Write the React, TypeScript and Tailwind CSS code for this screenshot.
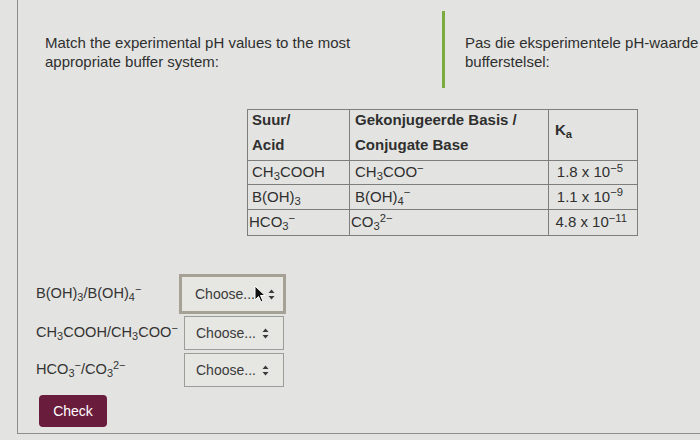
import React from "react";

const Arrows = () => (
	<svg width="7" height="11" viewBox="0 0 7 11" className="shrink-0">
		<path d="M3.5 0.5 L6.5 4 L0.5 4 Z" fill="#3a3a3a" />
		<path d="M3.5 10.5 L6.5 7 L0.5 7 Z" fill="#3a3a3a" />
	</svg>
);

const Cursor = () => (
	<svg width="12" height="18" viewBox="0 0 12 18" className="absolute left-[72px] top-[8px]">
		<path d="M1 1 L1 15 L4.5 11.5 L7 17 L9 16 L6.5 10.5 L11 10.5 Z" fill="#111" stroke="#fff" strokeWidth="1" />
	</svg>
);

const Select = ({ focused }: { focused?: boolean }) => (
	<div
		className={
			focused
				? "relative flex items-center gap-[13px] w-[107px] h-[40px] -ml-[5px] pl-[13px] border-[3px] border-[#a5a195] bg-[#e6e6e3]"
				: "relative flex items-center gap-[6px] w-[100px] h-[34px] pl-[11px] border border-[#9c9c98] bg-[#e6e6e3]"
		}
	>
		<span className="text-[14px] text-[#3a3a3a]">Choose...</span>
		<Arrows />
		{focused && <Cursor />}
	</div>
);

const Row = ({ label, focused, h }: { label: React.ReactNode; focused?: boolean; h: string }) => (
	<div className={`flex items-center ${h}`}>
		<div className="w-[166px] pl-[18px] text-[14.6px] text-[#333] whitespace-nowrap">{label}</div>
		<Select focused={focused} />
	</div>
);

export default function App() {
	return (
		<div className="w-[700px] h-[440px] overflow-hidden bg-[#e3e4e1] text-[#2f2f2f] font-['Liberation_Sans',Arial,sans-serif]">
			<div className="ml-[17px] h-[434px] border-l border-b border-[#8d8d8a]">
				<div className="flex h-[100px]">
					<div className="w-[407px] pl-[27px] pt-[33px] text-[15px] leading-[19px]">
						Match the experimental pH values to the most appropriate buffer system:
					</div>
					<div className="ml-[17px] mt-[11px] w-[3px] h-[77px] bg-[#7aab3c]" />
					<div className="pl-[20px] pt-[33px] text-[15px] leading-[19px] whitespace-nowrap">
						Pas die eksperimentele pH-waarde
						<br />
						bufferstelsel:
					</div>
				</div>

				<table className="ml-[229px] mt-[9px] border-collapse text-[15px] text-[#2f2f2f]">
					<tbody>
						<tr className="h-[51px]">
							<td className="w-[102px] border border-[#7e7e7c] pl-[4px] font-bold leading-[25px] align-top">
								<div className="-mt-[3px] pb-[3px]">
									Suur/
									<br />
									Acid
								</div>
							</td>
							<td className="w-[199px] border border-[#7e7e7c] pl-[5px] font-bold leading-[25px] align-top">
								<div className="-mt-[3px] pb-[3px]">
									Gekonjugeerde Basis /
									<br />
									Conjugate Base
								</div>
							</td>
							<td className="w-[89px] border border-[#7e7e7c] pl-[6px] pb-[10px] font-bold">
								K<sub>a</sub>
							</td>
						</tr>
						<tr className="h-[24px]">
							<td className="border border-[#7e7e7c] pl-[4px]">
								CH<sub>3</sub>COOH
							</td>
							<td className="border border-[#7e7e7c] pl-[5px]">
								CH<sub>3</sub>COO<sup>−</sup>
							</td>
							<td className="border border-[#7e7e7c] pr-[14px] text-right whitespace-nowrap">
								1.8 x 10<sup>−5</sup>
							</td>
						</tr>
						<tr className="h-[25px]">
							<td className="border border-[#7e7e7c] pl-[4px]">
								B(OH)<sub>3</sub>
							</td>
							<td className="border border-[#7e7e7c] pl-[5px]">
								B(OH)<sub>4</sub>
								<sup>−</sup>
							</td>
							<td className="border border-[#7e7e7c] pr-[14px] text-right whitespace-nowrap">
								1.1 x 10<sup>−9</sup>
							</td>
						</tr>
						<tr className="h-[26px]">
							<td className="border border-[#7e7e7c] pl-[1px]">
								HCO<sub>3</sub>
								<sup>−</sup>
							</td>
							<td className="border border-[#7e7e7c] pl-[1px]">
								CO<sub>3</sub>
								<sup>2−</sup>
							</td>
							<td className="border border-[#7e7e7c] pr-[10px] text-right whitespace-nowrap">
								4.8 x 10<sup>−11</sup>
							</td>
						</tr>
					</tbody>
				</table>

				<div className="mt-[38px] flex flex-col">
					<Row
						h="h-[40px]"
						focused
						label={
							<>
								B(OH)<sub>3</sub>/B(OH)<sub>4</sub>
								<sup>−</sup>
							</>
						}
					/>
					<div className="mt-[2px]">
						<Row
							h="h-[34px]"
							label={
								<>
									CH<sub>3</sub>COOH/CH<sub>3</sub>COO<sup>−</sup>
								</>
							}
						/>
					</div>
					<div className="mt-[3px]">
						<Row
							h="h-[34px]"
							label={
								<>
									HCO<sub>3</sub>
									<sup>−</sup>/CO<sub>3</sub>
									<sup>2−</sup>
								</>
							}
						/>
					</div>
				</div>

				<button className="ml-[21px] mt-[8px] w-[68px] h-[32px] rounded-[4px] bg-[#6a1c3c] text-[14px] text-white">
					Check
				</button>
			</div>
		</div>
	);
}
